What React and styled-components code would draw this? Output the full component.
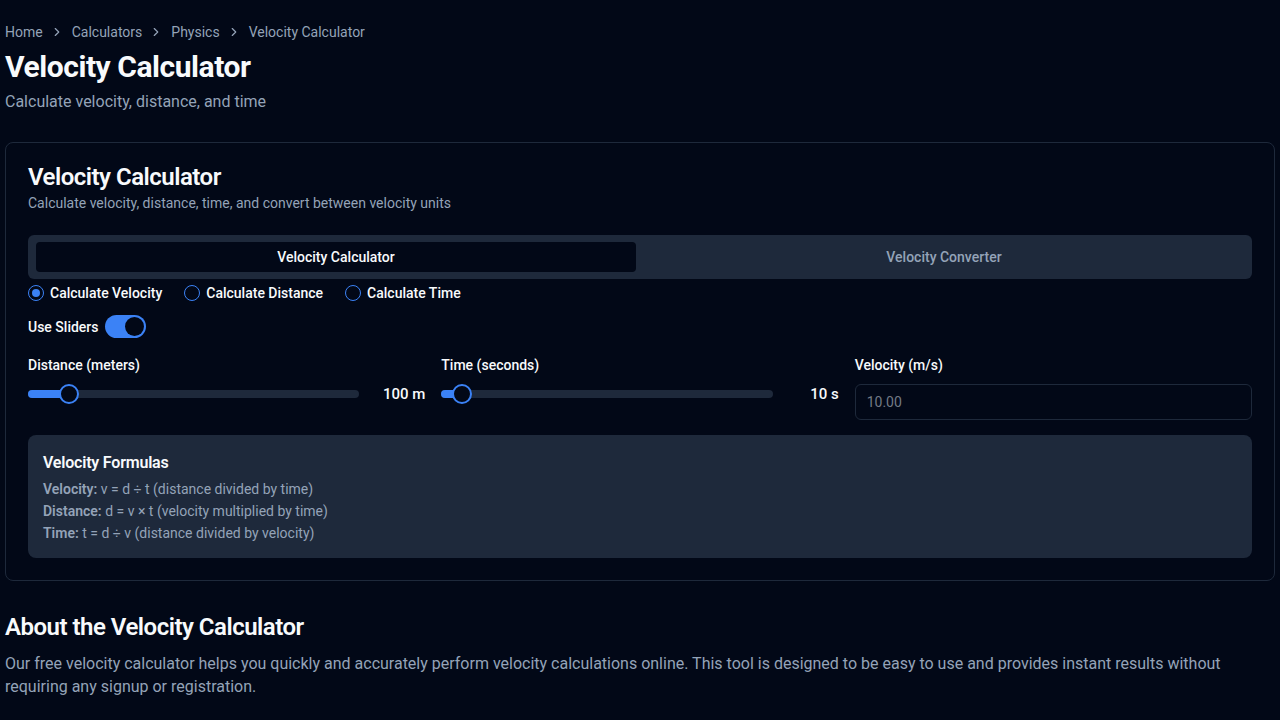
import { useState } from "react";
import styled, { createGlobalStyle } from "styled-components";
import { ChevronRight } from "lucide-react";

const GlobalStyle = createGlobalStyle`
  * { box-sizing: border-box; }
  body {
    margin: 0;
    background-color: #020817;
    color: #f8fafc;
    font-family: Roboto, "Liberation Sans", sans-serif;
  }
`;

const Page = styled.main`
  padding: 22px 5px 0;
`;

const Crumbs = styled.ol`
  display: flex;
  align-items: center;
  gap: 7px;
  margin: 0;
  padding: 0;
  list-style: none;
  font-size: 14px;
  line-height: 20px;
  color: #94a3b8;
`;

const Crumb = styled.li`
  display: flex;
  align-items: center;
`;

const PageTitle = styled.h1`
  margin: 7px 0 0;
  font-size: 30px;
  line-height: 36px;
  font-weight: 700;
  letter-spacing: -0.45px;
`;

const PageLead = styled.p`
  margin: 5px 0 0;
  font-size: 16px;
  line-height: 24px;
  color: #94a3b8;
`;

const Card = styled.section`
  margin-top: 28px;
  border: 1px solid #1e293b;
  border-radius: 8px;
  padding: 22px 22px 22px;
`;

const CardTitle = styled.h2`
  margin: 0;
  font-size: 24px;
  line-height: 24px;
  font-weight: 600;
  letter-spacing: -0.5px;
`;

const CardText = styled.p`
  margin: 4px 0 0;
  font-size: 14px;
  line-height: 20px;
  color: #94a3b8;
`;

const TabList = styled.div`
  margin-top: 22px;
  display: grid;
  grid-template-columns: 1fr 1fr;
  gap: 8px;
  padding: 7px 8px;
  border-radius: 6px;
  background-color: #1e293b;
`;

const Tab = styled.button`
  height: 30px;
  padding: 0 0 1px;
  border: none;
  border-radius: 4px;
  font-family: inherit;
  font-size: 14px;
  font-weight: 500;
  cursor: pointer;
  background-color: ${({ $active }) => ($active ? "#020817" : "transparent")};
  color: ${({ $active }) => ($active ? "#f8fafc" : "#94a3b8")};
`;

const RadioGroup = styled.div`
  margin-top: 4px;
  display: flex;
  align-items: center;
  gap: 22px;
`;

const RadioItem = styled.label`
  display: flex;
  align-items: center;
  gap: 6px;
  font-size: 14px;
  line-height: 20px;
  font-weight: 500;
  cursor: pointer;
`;

const RadioDot = styled.span`
  width: 16px;
  height: 16px;
  border-radius: 50%;
  border: 1px solid #3b82f6;
  display: flex;
  align-items: center;
  justify-content: center;

  &::after {
    content: "";
    width: 8px;
    height: 8px;
    border-radius: 50%;
    background-color: #3b82f6;
    display: ${({ $checked }) => ($checked ? "block" : "none")};
  }
`;

const SwitchRow = styled.div`
  margin-top: 12px;
  display: flex;
  align-items: center;
  gap: 6px;
  font-size: 14px;
  line-height: 20px;
  font-weight: 500;
`;

const Switch = styled.button`
  position: relative;
  width: 41px;
  height: 23px;
  padding: 0;
  border: none;
  border-radius: 999px;
  cursor: pointer;
  background-color: ${({ $on }) => ($on ? "#3b82f6" : "#1e293b")};

  &::after {
    content: "";
    position: absolute;
    top: 2px;
    left: ${({ $on }) => ($on ? "20px" : "2px")};
    width: 19px;
    height: 19px;
    border-radius: 50%;
    background-color: #020817;
  }
`;

const Fields = styled.div`
  margin-top: 17px;
  display: grid;
  grid-template-columns: repeat(3, 1fr);
  gap: 16px;
`;

const Field = styled.div`
  display: flex;
  flex-direction: column;
`;

const FieldLabel = styled.span`
  font-size: 14px;
  line-height: 20px;
  font-weight: 500;
  margin-bottom: 9px;
`;

const SliderRow = styled.div`
  display: flex;
  align-items: center;
  gap: 16px;
  height: 20px;
`;

const Track = styled.div`
  position: relative;
  flex: 1;
  height: 8px;
  border-radius: 999px;
  background-color: #1e293b;
`;

const Range = styled.div`
  position: absolute;
  left: 0;
  top: 0;
  bottom: 0;
  border-radius: 999px;
  background-color: #3b82f6;
`;

const Thumb = styled.span`
  position: absolute;
  top: -6px;
  width: 20px;
  height: 20px;
  border-radius: 50%;
  border: 2px solid #3b82f6;
  background-color: #020817;
`;

const SliderValue = styled.span`
  width: 50px;
  text-align: right;
  font-size: 15px;
  font-weight: 500;
  white-space: nowrap;
`;

const Input = styled.input`
  height: 36px;
  padding: 0 11px;
  border: 1px solid #1e293b;
  border-radius: 6px;
  background-color: #020817;
  color: #737a86;
  font-family: inherit;
  font-size: 14px;
  outline: none;
`;

const Formulas = styled.div`
  margin-top: 15px;
  padding: 16px 15px 14px;
  border-radius: 8px;
  background-color: #1e293b;
`;

const FormulasTitle = styled.h3`
  margin: 0 0 3px;
  font-size: 16px;
  line-height: 24px;
  font-weight: 600;
  letter-spacing: -0.2px;
`;

const FormulaLine = styled.p`
  margin: 0;
  font-size: 14px;
  line-height: 22px;
  color: #94a3b8;

  b {
    font-weight: 600;
  }
`;

const AboutTitle = styled.h2`
  margin: 30px 0 0;
  font-size: 24px;
  line-height: 32px;
  font-weight: 600;
  letter-spacing: -0.5px;
`;

const AboutText = styled.p`
  margin: 9px 0 0;
  font-size: 16px;
  line-height: 23px;
  color: #94a3b8;
`;

const Slider = ({ value, max, unit }) => {
  const pct = value / max;
  return (
    <SliderRow>
      <Track>
        <Range style={{ width: `calc(${pct * 100}% + ${10 - pct * 20}px)` }} />
        <Thumb style={{ left: `calc(${pct * 100}% - ${pct * 20}px)` }} />
      </Track>
      <SliderValue>
        {value} {unit}
      </SliderValue>
    </SliderRow>
  );
};

const crumbs = ["Home", "Calculators", "Physics", "Velocity Calculator"];
const modes = ["Calculate Velocity", "Calculate Distance", "Calculate Time"];

export default function App() {
  const [tab, setTab] = useState("calc");
  const [mode, setMode] = useState(modes[0]);
  const [sliders, setSliders] = useState(true);

  return (
    <Page>
      <GlobalStyle />
      <nav>
        <Crumbs>
          {crumbs.map((c, i) => (
            <Crumb key={c}>
              {i > 0 && <ChevronRight size={14} style={{ marginRight: 8 }} />}
              {c}
            </Crumb>
          ))}
        </Crumbs>
      </nav>
      <PageTitle>Velocity Calculator</PageTitle>
      <PageLead>Calculate velocity, distance, and time</PageLead>

      <Card>
        <CardTitle>Velocity Calculator</CardTitle>
        <CardText>
          Calculate velocity, distance, time, and convert between velocity units
        </CardText>

        <TabList>
          <Tab $active={tab === "calc"} onClick={() => setTab("calc")}>
            Velocity Calculator
          </Tab>
          <Tab $active={tab === "conv"} onClick={() => setTab("conv")}>
            Velocity Converter
          </Tab>
        </TabList>

        <RadioGroup>
          {modes.map((m) => (
            <RadioItem key={m} onClick={() => setMode(m)}>
              <RadioDot $checked={mode === m} />
              {m}
            </RadioItem>
          ))}
        </RadioGroup>

        <SwitchRow>
          Use Sliders
          <Switch $on={sliders} onClick={() => setSliders(!sliders)} />
        </SwitchRow>

        <Fields>
          <Field>
            <FieldLabel>Distance (meters)</FieldLabel>
            <Slider value={100} max={1000} unit="m" />
          </Field>
          <Field>
            <FieldLabel>Time (seconds)</FieldLabel>
            <Slider value={10} max={300} unit="s" />
          </Field>
          <Field>
            <FieldLabel>Velocity (m/s)</FieldLabel>
            <Input readOnly value="10.00" />
          </Field>
        </Fields>

        <Formulas>
          <FormulasTitle>Velocity Formulas</FormulasTitle>
          <FormulaLine>
            <b>Velocity:</b> v = d ÷ t (distance divided by time)
          </FormulaLine>
          <FormulaLine>
            <b>Distance:</b> d = v × t (velocity multiplied by time)
          </FormulaLine>
          <FormulaLine>
            <b>Time:</b> t = d ÷ v (distance divided by velocity)
          </FormulaLine>
        </Formulas>
      </Card>

      <AboutTitle>About the Velocity Calculator</AboutTitle>
      <AboutText>
        Our free velocity calculator helps you quickly and accurately perform
        velocity calculations online. This tool is designed to be easy to use
        and provides instant results without requiring any signup or
        registration.
      </AboutText>
    </Page>
  );
}
